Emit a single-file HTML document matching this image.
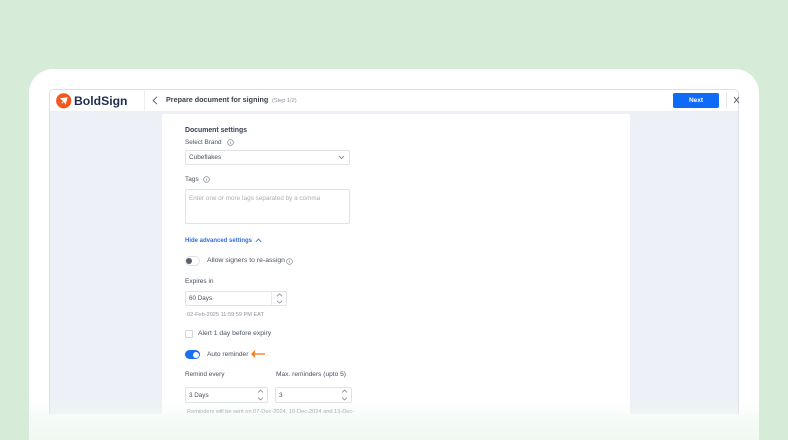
<!DOCTYPE html>
<html>
<head>
<meta charset="utf-8">
<style>
html,body{margin:0;padding:0;width:788px;height:440px;overflow:hidden;}
body{background:#d6ecd8;position:relative;font-family:"Liberation Sans",sans-serif;color:#374151;}
div,span{position:absolute;box-sizing:border-box;white-space:nowrap;}
svg{position:absolute;overflow:visible;}
#w{left:0;top:0;width:788px;height:440px;overflow:hidden;filter:blur(.3px);}
.t{font-size:6.5px;line-height:10px;color:#4a525e;}
.box{background:#fff;border:1px solid #dfe2e6;border-radius:2px;}
</style>
</head>
<body>
<div id="w">
<div style="left:29px;top:69px;width:730px;height:371px;background:#fff;border-radius:24px 24px 0 0;"></div>

<div style="left:49px;top:89px;width:690px;height:325px;background:#edf1f7;border:1px solid #dcdfe3;border-bottom:0;border-radius:5px 5px 0 0;"></div>
<div style="left:50px;top:90px;width:688px;height:22px;background:#fff;border-radius:4px 4px 0 0;border-bottom:1px solid #eceef1;"></div>
<div style="left:144px;top:90px;width:1px;height:22px;background:#eceef1;"></div>
<div style="left:726px;top:92px;width:1px;height:17px;background:#e6e8eb;"></div>

<svg style="left:56px;top:93px" width="16" height="16" viewBox="0 0 16 16"><circle cx="7.700" cy="7.800" r="7.600" fill="#f4581c"/><path d="M3.600 5.200 L11.600 4.200 L9.600 11.800 L7.600 8.400 Z" fill="#fff"/><path d="M7.600 8.400 L5.800 10.200" stroke="#fff" stroke-width="1"/></svg>
<div style="left:74px;top:92px;font-size:12.200px;line-height:18px;font-weight:bold;color:#1f2d4d;">BoldSign</div>

<svg style="left:152px;top:96px" width="6" height="9" viewBox="0 0 6 9"><path d="M5 .8 L1.200 4.500 L5 8.200" fill="none" stroke="#5c6470" stroke-width="1"/></svg>
<div style="left:166px;top:95px;font-size:7.200px;line-height:10px;font-weight:bold;color:#3b4350;">Prepare document for signing</div>
<div style="left:272px;top:95.500px;font-size:5.600px;line-height:10px;color:#8b929c;">(Step 1/2)</div>

<div style="left:673px;top:93px;width:46px;height:15px;background:#0f6bf5;border-radius:2px;color:#fff;font-size:6.500px;line-height:15px;font-weight:bold;text-align:center;">Next</div>
<svg style="left:733px;top:96px" width="7" height="8" viewBox="0 0 7 8"><path d="M1 1 L6 7 M6 1 L1 7" stroke="#6b7078" stroke-width="1"/></svg>

<div style="left:162px;top:114px;width:468px;height:300px;background:#fff;"></div>

<div style="left:185px;top:126px;font-size:6.900px;line-height:10px;font-weight:bold;color:#3a4250;">Document settings</div>
<div class="t" style="left:185px;top:138px;font-size:6.400px;">Select Brand</div>
<svg style="left:227px;top:139px" width="7" height="7" viewBox="0 0 7 7"><circle cx="3.500" cy="3.500" r="2.900" fill="none" stroke="#8a9099" stroke-width=".7"/><path d="M3.500 3v2M3.500 1.800v.6" stroke="#8a9099" stroke-width=".7"/></svg>
<div class="box" style="left:185px;top:150px;width:165px;height:15px;"></div>
<div class="t" style="left:189px;top:153px;font-size:6.450px;">Cubeflakes</div>
<svg style="left:338px;top:155px" width="7" height="5" viewBox="0 0 7 5"><path d="M1 1 L3.500 3.500 L6 1" fill="none" stroke="#6b7280" stroke-width=".8"/></svg>

<div class="t" style="left:185px;top:175px;">Tags</div>
<svg style="left:203px;top:176px" width="7" height="7" viewBox="0 0 7 7"><circle cx="3.500" cy="3.500" r="2.900" fill="none" stroke="#8a9099" stroke-width=".7"/><path d="M3.500 3v2M3.500 1.800v.6" stroke="#8a9099" stroke-width=".7"/></svg>
<div class="box" style="left:185px;top:189px;width:165px;height:35px;"></div>
<div style="left:189px;top:193.500px;font-size:6.350px;line-height:10px;color:#a9aeb6;">Enter one or more tags separated by a comma</div>

<div style="left:185px;top:235.500px;font-size:6px;line-height:10px;font-weight:bold;color:#2f6fe0;">Hide advanced settings</div>
<svg style="left:255px;top:238px" width="7" height="5" viewBox="0 0 7 5"><path d="M.8 4 L3.500 1 L6.200 4" fill="none" stroke="#2f6fe0" stroke-width=".9"/></svg>

<div style="left:185px;top:256px;width:15px;height:10px;background:#fff;border:1px solid #dcdfe3;border-radius:5px;"></div>
<div style="left:186px;top:258px;width:6px;height:6px;background:#5c6068;border-radius:50%;"></div>
<div class="t" style="left:207px;top:256px;font-size:6.850px;">Allow signers to re-assign</div>
<svg style="left:286px;top:258px" width="7" height="7" viewBox="0 0 7 7"><circle cx="3.500" cy="3.500" r="2.900" fill="none" stroke="#8a9099" stroke-width=".7"/><path d="M3.500 3v2M3.500 1.800v.6" stroke="#8a9099" stroke-width=".7"/></svg>

<div class="t" style="left:185px;top:277px;">Expires in</div>
<div class="box" style="left:185px;top:291px;width:102px;height:15px;"></div>
<div style="left:271px;top:291px;width:1px;height:15px;background:#e8eaed;"></div>
<div class="t" style="left:189px;top:294px;font-size:6.300px;">60 Days</div>
<svg style="left:276px;top:293px" width="7" height="11" viewBox="0 0 7 11"><path d="M1 3.200 L3.500 .8 L6 3.200 M1 7.800 L3.500 10.200 L6 7.800" fill="none" stroke="#6b7280" stroke-width=".7"/></svg>
<div style="left:187px;top:309.500px;font-size:5.600px;line-height:10px;color:#8b929c;">02-Feb-2025 11:59:59 PM EAT</div>

<div style="left:185px;top:330px;width:8px;height:8px;background:#fff;border:1px solid #d3d6db;border-radius:1px;"></div>
<div class="t" style="left:198px;top:329px;font-size:6.750px;">Alert 1 day before expiry</div>

<div style="left:185px;top:350px;width:15px;height:9px;background:#1b6ff0;border-radius:5px;"></div>
<div style="left:193px;top:351.500px;width:6px;height:6px;background:#fff;border-radius:50%;"></div>
<div class="t" style="left:207px;top:350px;font-size:6.600px;">Auto reminder</div>
<svg style="left:250px;top:349px" width="16" height="10" viewBox="0 0 16 10"><path d="M15 5 H3" stroke="#f47a1f" stroke-width="1.300"/><path d="M5.300 .8 L1 5 L5.300 9.200 L4.500 5 Z" fill="#f47a1f"/></svg>

<div class="t" style="left:185px;top:370px;font-size:6.400px;">Remind every</div>
<div class="t" style="left:276px;top:370px;font-size:6.600px;">Max. reminders (upto 5)</div>

<div class="box" style="left:185px;top:387px;width:83px;height:16px;"></div>
<div class="t" style="left:189px;top:390.500px;font-size:6.300px;">3 Days</div>
<svg style="left:257px;top:389px" width="7" height="12" viewBox="0 0 7 12"><path d="M1 3.500 L3.500 1 L6 3.500 M1 8.500 L3.500 11 L6 8.500" fill="none" stroke="#6b7280" stroke-width=".7"/></svg>
<div class="box" style="left:275px;top:387px;width:77px;height:16px;"></div>
<div class="t" style="left:279px;top:390.500px;">3</div>
<svg style="left:341px;top:389px" width="7" height="12" viewBox="0 0 7 12"><path d="M1 3.500 L3.500 1 L6 3.500 M1 8.500 L3.500 11 L6 8.500" fill="none" stroke="#6b7280" stroke-width=".7"/></svg>
<div style="left:187px;top:407px;font-size:5.650px;line-height:10px;color:#8b929c;">Reminders will be sent on 07-Dec-2024, 10-Dec-2024 and 13-Dec-</div>

<div style="left:29px;top:398px;width:730px;height:42px;background:linear-gradient(to bottom,rgba(241,249,243,0) 0,rgba(241,249,243,.3) 14px,rgba(241,249,243,.7) 19px,#f1f9f2 100%);"></div>
</div>
</body>
</html>
